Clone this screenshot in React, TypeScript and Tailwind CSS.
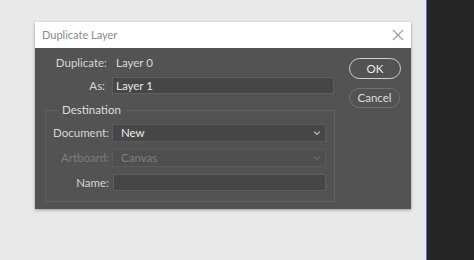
import React from "react";

const font = { fontFamily: 'Lato, "Open Sans", sans-serif' };

function Chevron({ color }: { color: string }) {
  return (
    <svg width="8" height="6" viewBox="0 0 8 6" className="shrink-0">
      <path d="M1.2 1.6 L4 4.4 L6.8 1.6" fill="none" stroke={color} strokeWidth="1.3" />
    </svg>
  );
}

export default function App() {
  return (
    <div className="w-[474px] h-[260px] flex overflow-hidden text-[11.5px] leading-[16px]" style={font}>
      <div className="w-[426px] h-full bg-[#e9e9e9] pl-[35px] pt-[22px]">
        <div className="w-[376px] h-[187px] flex flex-col shadow-[0_1px_3px_rgba(0,0,0,0.35)]">
          <div className="h-[26px] bg-white flex items-center justify-between pl-[7px] pr-[7px]">
            <span className="text-[#8a8a8a] text-[11px]">Duplicate Layer</span>
            <svg width="12" height="12" viewBox="0 0 12 12">
              <path d="M1 1 L11 11 M11 1 L1 11" stroke="#9a9a9a" strokeWidth="1.1" />
            </svg>
          </div>
          <div className="flex-1 bg-[#535353] flex">
            <div className="w-[300px] flex flex-col">
              <div className="flex items-center h-[16px] mt-[7px]">
                <span className="w-[72px] text-right text-[#d6d6d6]">Duplicate:</span>
                <span className="ml-[9px] text-[#d6d6d6]">Layer 0</span>
              </div>
              <div className="flex items-center mt-[6px]">
                <span className="w-[70px] text-right text-[#d6d6d6]">As:</span>
                <div className="ml-[7px] w-[222px] h-[17px] bg-[#464646] border border-[#5e5e5e] flex items-center pl-[3px] text-[#e6e6e6]">
                  Layer 1
                </div>
              </div>
              <fieldset className="ml-[10px] mt-[9px] w-[290px] h-[99px] border border-[#626262] px-0">
                <legend className="ml-[12px] px-[4px] text-[#dedede] leading-[14px]">Destination</legend>
                <div className="flex flex-col mt-[7px]">
                  <div className="flex items-center h-[18px]">
                    <span className="w-[63px] text-right text-[#d6d6d6]">Document:</span>
                    <div className="ml-[3px] w-[214px] h-[18px] bg-[#474747] border border-[#5a5a5a] flex items-center justify-between pl-[8px] pr-[4px] text-[#ececec]">
                      <span>New</span>
                      <Chevron color="#bdbdbd" />
                    </div>
                  </div>
                  <div className="flex items-center h-[18px] mt-[7px]">
                    <span className="w-[63px] text-right text-[#7d7d7d]">Artboard:</span>
                    <div className="ml-[3px] w-[214px] h-[18px] bg-[#4f4f4f] border border-[#5a5a5a] flex items-center justify-between pl-[8px] pr-[4px] text-[#7f7f7f]">
                      <span>Canvas</span>
                      <Chevron color="#6a6a6a" />
                    </div>
                  </div>
                  <div className="flex items-center h-[17px] mt-[7px]">
                    <span className="w-[63px] text-right text-[#d6d6d6]">Name:</span>
                    <div className="ml-[4px] w-[213px] h-[17px] bg-[#464646] border border-[#5e5e5e]"></div>
                  </div>
                </div>
              </fieldset>
            </div>
            <div className="flex flex-col items-start pl-[14px] pt-[10px]">
              <button className="w-[52px] h-[21px] rounded-full border-[1.5px] border-[#cfcfcf] text-[#ececec] flex items-center justify-center leading-none">
                OK
              </button>
              <button className="mt-[9px] w-[51px] h-[20px] rounded-full border-[1.5px] border-[#6f6f6f] text-[#dedede] flex items-center justify-center leading-none">
                Cancel
              </button>
            </div>
          </div>
        </div>
      </div>
      <div className="w-[1px] h-full bg-[#5a73c9]"></div>
      <div className="flex-1 h-full bg-[#262626]"></div>
    </div>
  );
}
